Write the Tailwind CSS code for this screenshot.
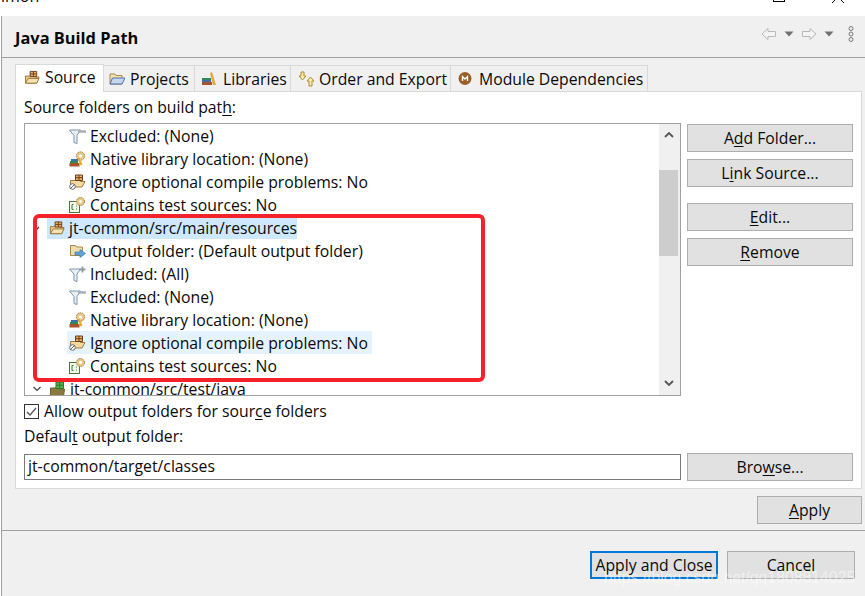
<!DOCTYPE html>
<html><head><meta charset="utf-8">
<script src="https://cdn.jsdelivr.net/npm/@tailwindcss/browser@4"></script>
</head>
<body class="m-0 bg-white">
<svg width="0" height="0" class="absolute">
<defs>
<symbol id="pkg" viewBox="0 0 17 16"><path d="M1.500 14 L1.500 6.500 L6 6.500 L7 5 L12 5 L12 7.500 L16 7.500 L13.500 14Z" fill="#eccb8c" stroke="#9c7434"/><path d="M1.500 14 L4.500 9 L16 9 L13.500 14Z" fill="#f6e2b2" stroke="#9c7434"/><path d="M6.500 1.500h7v5.500h-7zM10 1.500v5.500M6.500 4.200h7" fill="#e6b06a" stroke="#6e3e1a"/></symbol>
<symbol id="filter" viewBox="0 0 17 16"><path d="M0.500 2h11L8 7.500V15.500L5 14.500V7.500Z" fill="#e8f0f6" stroke="#7d95a8"/><path d="M9 3.500h8" stroke="#a5b0b8" stroke-width="2.500"/></symbol>
<symbol id="filterp" viewBox="0 0 17 16"><path d="M0.500 3h11L8 8V15.500L5 14.500V8Z" fill="#e8f0f6" stroke="#7d95a8"/><path d="M13.500 0.500v6M10.500 3.500h6" stroke="#8a9aa6" stroke-width="1.800"/></symbol>
<symbol id="native" viewBox="0 0 17 16"><path d="M1 10h8v2H1z" fill="#2f8a5b"/><path d="M2 8h7v2H2z" fill="#3f6fae"/><path d="M0.500 12h10v3.500H0.500z" fill="#a9532a"/><circle cx="11.500" cy="5" r="4.200" fill="#e8c987" stroke="#a07a3c" stroke-dasharray="1.500 .8"/><circle cx="11.500" cy="5" r="1.500" fill="#fff"/><path d="M9.500 7l3 7" stroke="#e8a92c" stroke-width="2.200"/></symbol>
<symbol id="ignore" viewBox="0 0 17 16"><path d="M1.500 12V6.500h5l1-1.500h4V7.500h4.500l-3 5.500H3Z" fill="#f3d9a0" stroke="#a07a3c"/><path d="M6.500 1h7v5.500h-7zM10 1v5.500M6.500 3.700h7" fill="#e6b06a" stroke="#6e3e1a"/><circle cx="3.500" cy="12.500" r="2.800" fill="#fff" stroke="#666"/><path d="M1.500 14.500l4-4" stroke="#666"/></symbol>
<symbol id="test" viewBox="0 0 17 16"><rect x="0.500" y="4.500" width="10" height="11" fill="#f4f8e8" stroke="#4a7a3a"/><path d="M3 7.500h1.500M3 7.500v5h1.500M7 9h1M7 12h1" stroke="#3a7a3a" fill="none"/><circle cx="11.500" cy="4.500" r="4" fill="#e8c987" stroke="#a07a3c" stroke-dasharray="1.500 .8"/><circle cx="11.500" cy="4.500" r="1.400" fill="#fff"/></symbol>
<symbol id="output" viewBox="0 0 17 16"><path d="M1.500 12.500V2.500h5l1 1.500h6v8.500Z" fill="#f0dcae" stroke="#a98a4a"/><path d="M6 9h5V6.500l5.500 4L11 14.500V12H6Z" fill="#5fa5d6" stroke="#3a7ca8" stroke-width=".7"/></symbol>
<symbol id="tsrc" viewBox="0 0 17 16"><path d="M1.500 15V7h5l1-1.500h4V8h4l-1 7Z" fill="#8b7a3f" stroke="#6e5f2c"/><path d="M7 1h7.500v6.500H7zM10.700 1v6.500M7 4.200h7.500" fill="#5cb04e" stroke="#2a7a2a"/></symbol>
</defs>
</svg>
<div class="relative w-[865px] h-[596px] overflow-hidden bg-white text-[15.75px] leading-[22px] text-[#0a0a0a] whitespace-nowrap" style="font-family:'Open Sans','Noto Sans',sans-serif">

  <div class="relative h-4 overflow-hidden">
    <span class="absolute left-[1px] top-[-15px] text-[16px]">lmon</span>
    <span class="absolute left-[773px] top-[-10px] w-[12px] h-[12px] border border-black"></span>
    <svg class="absolute left-[832px] top-0" width="12" height="4" viewBox="0 0 12 4"><path d="M0 3L3 0M12 3L9 0" stroke="#111"/></svg>
  </div>

  <div class="h-[580px] ml-[1px] border-l border-[#a0a0a0] bg-[#f0f0f0] flex flex-col">
    <div class="h-[42px] shrink-0 border-b border-[#a0a0a0] flex items-center justify-between pl-[13px] pr-[11px]">
      <span class="font-bold text-[16.4px] pt-[2px]">Java Build Path</span>
      <div class="flex items-center pb-[5px]">
        <svg width="16" height="14" viewBox="0 0 16 14"><path d="M1 7L7 1.500V4.500H14.500V9.500H7V12.500Z" fill="#f4f4f4" stroke="#b8b8b8"/></svg>
        <svg class="ml-[7px]" width="10" height="6" viewBox="0 0 10 6"><path d="M0.500 0.500H9.500L5 5.500Z" fill="#707070"/></svg>
        <svg class="ml-[7px]" width="16" height="14" viewBox="0 0 16 14"><path d="M15 7L9 1.500V4.500H1.500V9.500H9V12.500Z" fill="#f4f4f4" stroke="#b8b8b8"/></svg>
        <svg class="ml-[7px]" width="10" height="6" viewBox="0 0 10 6"><path d="M0.500 0.500H9.500L5 5.500Z" fill="#707070"/></svg>
        <svg class="ml-[14px]" width="6" height="16" viewBox="0 0 6 16"><circle cx="3" cy="2.500" r="2" fill="none" stroke="#777"/><circle cx="3" cy="8" r="2" fill="none" stroke="#777"/><circle cx="3" cy="13.500" r="2" fill="none" stroke="#777"/></svg>
      </div>
    </div>

    <div class="flex-1 flex flex-col pl-[13px] pr-[3px]">
      <div class="flex items-end h-[33px] pt-[6px]">
        <div class="relative z-10 w-[89px] h-[28px] mb-[-1px] bg-white border border-b-0 border-[#d9d9d9] flex items-center pl-[8px] gap-[5px] pb-[3px]">
          <svg width="16" height="15"><use href="#pkg"/></svg><span>Source</span>
        </div>
        <div class="w-[91px] h-[26px] border-r border-t border-[#d9d9d9] flex items-center pl-[5px] gap-[5px]">
          <svg width="16" height="15" viewBox="0 0 16 15"><path d="M1 13V3h5l1 1.500h6V13Z" fill="#f3dfb0" stroke="#a98a4a"/><path d="M1 13l2.500-6H16l-3 6Z" fill="#c5d6ef" stroke="#4a6fb0"/></svg><span>Projects</span>
        </div>
        <div class="w-[96px] h-[26px] border-r border-t border-[#d9d9d9] flex items-center pl-[6px] gap-[6px]">
          <svg width="16" height="15" viewBox="0 0 16 15"><path d="M1 7h9v2H1z" fill="#2f8a5b"/><path d="M1 9h9v2H1z" fill="#3f6fae"/><path d="M1 11h10v3H1z" fill="#a9532a"/><path d="M9 2l2-1 4 13h-3Z" fill="#e0a93c"/></svg><span>Libraries</span>
        </div>
        <div class="w-[160px] h-[26px] border-r border-t border-[#d9d9d9] flex items-center pl-[7px] gap-[4px]">
          <svg width="17" height="16" viewBox="0 0 17 16"><path d="M3 1h3v4h2L4.500 9 1 5h2Z" fill="#f8e9b0" stroke="#b48a2a"/><path d="M11 15h3v-5h2l-3.500-4L9 10h2Z" fill="#f8e9b0" stroke="#b48a2a"/></svg><span>Order and Export</span>
        </div>
        <div class="w-[197px] h-[26px] border-r border-t border-[#d9d9d9] flex items-center pl-[7px] gap-[7px]">
          <svg width="14" height="14" viewBox="0 0 14 14"><circle cx="7" cy="6.500" r="6.500" fill="#9a5f28"/><path d="M4.500 9V4.500L7 7l2.500-2.500V9" fill="none" stroke="#fff" stroke-width="1.300"/></svg><span>Module Dependencies</span>
        </div>
      </div>

      <div class="h-[398px] bg-white border border-[#d9d9d9] pl-[8px] pr-[7px] flex flex-col">
        <div class="h-[31px] flex items-center pb-[1px]"><span>Source folders on build pat<u class="underline-offset-2">h</u>:</span></div>
        <div class="flex gap-[6px] h-[273px]">
          <div class="relative w-[657px] h-[273px] border border-[#a0a0a0] bg-white overflow-hidden shrink-0">
            <div class="flex flex-col">
              <div class="h-[23px] flex items-center pl-[44px] gap-[4px]"><svg width="17" height="16"><use href="#filter"/></svg><span>Excluded: (None)</span></div>
              <div class="h-[23px] flex items-center pl-[44px] gap-[4px]"><svg width="17" height="16"><use href="#native"/></svg><span>Native library location: (None)</span></div>
              <div class="h-[23px] flex items-center pl-[44px] gap-[4px]"><svg width="17" height="16"><use href="#ignore"/></svg><span>Ignore optional compile problems: No</span></div>
              <div class="h-[23px] flex items-center pl-[44px] gap-[4px]"><svg width="17" height="16"><use href="#test"/></svg><span>Contains test sources: No</span></div>
              <div class="h-[23px] flex items-center pl-[8px]">
                <svg width="8" height="8" viewBox="0 0 8 8" class="mr-[6px]"><path d="M1 5l1.500 1.500L6 3" fill="none" stroke="#444" stroke-width="1.300"/></svg>
                <div class="h-[23px] w-[250px] bg-[#cde8ff] flex items-center pl-[2px] gap-[4px]"><svg width="17" height="16"><use href="#pkg"/></svg><span>jt-common/src/main/resources</span></div>
              </div>
              <div class="h-[23px] flex items-center pl-[44px] gap-[4px]"><svg width="17" height="16"><use href="#output"/></svg><span>Output folder: (Default output folder)</span></div>
              <div class="h-[23px] flex items-center pl-[44px] gap-[4px]"><svg width="17" height="16"><use href="#filterp"/></svg><span>Included: (All)</span></div>
              <div class="h-[23px] flex items-center pl-[44px] gap-[4px]"><svg width="17" height="16"><use href="#filter"/></svg><span>Excluded: (None)</span></div>
              <div class="h-[23px] flex items-center pl-[44px] gap-[4px]"><svg width="17" height="16"><use href="#native"/></svg><span>Native library location: (None)</span></div>
              <div class="h-[23px] w-[305px] ml-[42px] bg-[#e5f3ff] flex items-center pl-[2px] gap-[4px]"><svg width="17" height="16"><use href="#ignore"/></svg><span>Ignore optional compile problems: No</span></div>
              <div class="h-[23px] flex items-center pl-[44px] gap-[4px]"><svg width="17" height="16"><use href="#test"/></svg><span>Contains test sources: No</span></div>
              <div class="h-[23px] flex items-center pl-[8px]">
                <svg width="8" height="6" viewBox="0 0 8 6" class="mr-[6px]"><path d="M0.500 1L4 4.500 7.500 1" fill="none" stroke="#444" stroke-width="1.200"/></svg>
                <div class="flex items-center pl-[2px] gap-[4px]"><svg width="17" height="16"><use href="#tsrc"/></svg><span>jt-common/src/test/java</span></div>
              </div>
            </div>
            <div class="absolute right-0 top-0 bottom-0 w-[21px] bg-[#f0f0f0] flex flex-col items-center pr-[2px]">
              <svg class="mt-[8px]" width="10" height="6" viewBox="0 0 10 6"><path d="M1 5L5 1 9 5" fill="none" stroke="#555" stroke-width="1.800"/></svg>
              <div class="mt-[32px] w-full h-[86px] bg-[#cdcdcd]"></div>
              <svg class="mt-auto mb-[9px]" width="10" height="6" viewBox="0 0 10 6"><path d="M1 1L5 5 9 1" fill="none" stroke="#555" stroke-width="1.800"/></svg>
            </div>
          </div>
          <div class="flex flex-col w-[166px]">
            <div class="mt-[1px] h-[28px] bg-[#e1e1e1] border border-[#adadad] flex items-center justify-center"><span>A<u class="underline-offset-2">d</u>d Folder...</span></div>
            <div class="mt-[7px] h-[28px] bg-[#e1e1e1] border border-[#adadad] flex items-center justify-center"><span>L<u class="underline-offset-2">i</u>nk Source...</span></div>
            <div class="mt-[16px] h-[28px] bg-[#e1e1e1] border border-[#adadad] flex items-center justify-center"><span><u class="underline-offset-2">E</u>dit...</span></div>
            <div class="mt-[7px] h-[28px] bg-[#e1e1e1] border border-[#adadad] flex items-center justify-center"><span><u class="underline-offset-2">R</u>emove</span></div>
          </div>
        </div>
        <div class="mt-[4px] h-[24px] flex items-center gap-[5px] pb-[2px]">
          <span class="w-[15px] h-[15px] border border-[#333] bg-white flex items-center justify-center"><svg width="13" height="13" viewBox="0 0 13 13"><path d="M2 7l3 3 6-7" fill="none" stroke="#555" stroke-width="1.300"/></svg></span>
          <span>Allow output folders for sour<u class="underline-offset-2">c</u>e folders</span>
        </div>
        <div class="h-[25px] flex items-center pb-[2px]"><span>Defaul<u class="underline-offset-2">t</u> output folder:</span></div>
        <div class="mt-[4px] flex gap-[6px]">
          <div class="w-[657px] h-[26px] mt-[1px] border border-[#7a7a7a] bg-white flex items-center pl-[3px] pb-[2px] shrink-0">jt-common/target/classes</div>
          <div class="w-[166px] h-[28px] bg-[#e1e1e1] border border-[#adadad] flex items-center justify-center"><span>Bro<u class="underline-offset-2">w</u>se...</span></div>
        </div>
      </div>

      <div class="flex justify-end mt-[7px] h-[29px]">
        <div class="w-[105px] h-[28px] bg-[#e1e1e1] border border-[#adadad] flex items-center justify-center"><span><u class="underline-offset-2">A</u>pply</span></div>
      </div>
    </div>

    <div class="h-[66px] shrink-0 border-t border-[#a0a0a0] flex justify-end items-start pt-[20px] pr-[10px] gap-[9px] mt-[5px]">
      <div class="w-[128px] h-[28px] bg-[#e1e1e1] border-2 border-[#0078d7] flex items-center justify-center">Apply and Close</div>
      <div class="w-[128px] h-[28px] bg-[#e1e1e1] border border-[#adadad] flex items-center justify-center">Cancel</div>
    </div>
  </div>

  <div class="absolute left-[33px] top-[214px] w-[452px] h-[168px] border-4 border-[#f5222a] rounded-[6px]"></div>
  <div class="absolute left-[604px] top-[567px] text-[15.8px] text-white/50" style="font-family:'Liberation Sans',sans-serif">https://blog.csdn.net/qq1808814025</div>
</div>
</body></html>
